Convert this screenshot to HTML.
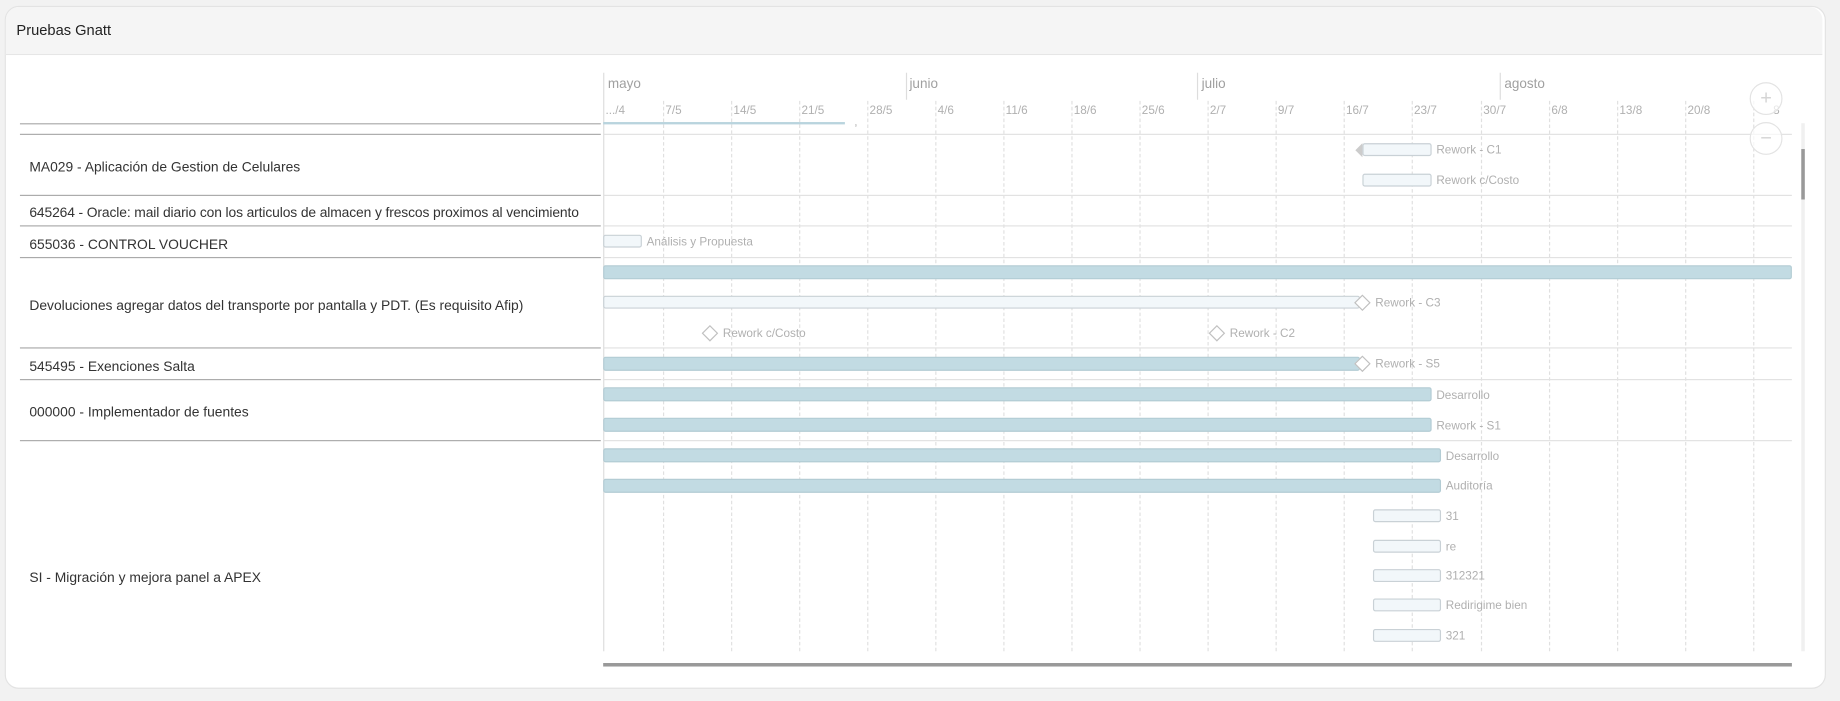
<!DOCTYPE html>
<html><head><meta charset="utf-8"><style>
html,body{margin:0;padding:0;background:#f2f2f2;width:1840px;height:701px;overflow:hidden;font-family:"Liberation Sans",sans-serif}
#w{position:absolute;left:0;top:0;width:1568px;height:597px;transform:scale(1.17347);transform-origin:0 0}
.a{position:absolute}
.card{left:4px;top:5px;width:1550px;height:580px;background:#fff;border:1px solid #e3e3e3;border-radius:12px;overflow:hidden}
.t{font-size:11.8px;color:#333;white-space:nowrap;line-height:14px}
.ll{height:1px;background:#aaa;left:17px;width:495px}
.cl{height:1px;background:#e2e2e2;left:514px;width:1013px}
.g{width:0;border-left:1px dashed #e0e0e0;top:86px;height:469px}
.wk{font-size:10px;color:#b0b0b0;top:89px;line-height:12px}
.mo{font-size:11.5px;color:#a0a0a0;top:65px;line-height:14px}
.ml{width:1px;background:#ddd;top:62px;height:23px}
.lb{height:11px;background:#f2f7fa;border:1px solid #c9d1d6;border-radius:2px;box-sizing:border-box}
.bb{height:12px;background:#c2dbe3;border:1px solid #b3ccd4;border-radius:2px;box-sizing:border-box}
.tx{font-size:10px;color:#b0b0b0;white-space:nowrap;line-height:12px}
.dm{width:8px;height:8px;border:1px solid #c0c0c0;background:#fff;transform:rotate(45deg)}
</style></head><body><div id="w">
<div class="a card"></div>
<div class="a" style="left:5px;top:6px;width:1548px;height:40px;background:#f5f5f5;border-radius:11px 11px 0 0;border-bottom:1px solid #e6e6e6"></div>
<div class="a t" style="left:14px;top:19px;font-size:12.5px;color:#222">Pruebas Gnatt</div>

<div class="a ll" style="top:105px"></div>
<div class="a ll" style="top:114px"></div>
<div class="a ll" style="top:166px"></div>
<div class="a ll" style="top:192px"></div>
<div class="a ll" style="top:219px"></div>
<div class="a ll" style="top:296px"></div>
<div class="a ll" style="top:323px"></div>
<div class="a ll" style="top:375px"></div>
<div class="a t" style="left:25px;top:135px">MA029 - Aplicación de Gestion de Celulares</div>
<div class="a t" style="left:25px;top:174px;letter-spacing:-0.1px">645264 - Oracle: mail diario con los articulos de almacen y frescos proximos al vencimiento</div>
<div class="a t" style="left:25px;top:201px">655036 - CONTROL VOUCHER</div>
<div class="a t" style="left:25px;top:253px">Devoluciones agregar datos del transporte por pantalla y PDT. (Es requisito Afip)</div>
<div class="a t" style="left:25px;top:305px">545495 - Exenciones Salta</div>
<div class="a t" style="left:25px;top:344px">000000 - Implementador de fuentes</div>
<div class="a t" style="left:25px;top:485px">SI - Migración y mejora panel a APEX</div>

<div class="a" style="left:514px;top:62px;width:1px;height:493px;background:#ddd"></div>
<div class="a ml" style="left:772px"></div><div class="a ml" style="left:1020px"></div><div class="a ml" style="left:1278px"></div>
<div class="a mo" style="left:518px">mayo</div><div class="a mo" style="left:775px">junio</div><div class="a mo" style="left:1024px">julio</div><div class="a mo" style="left:1282px">agosto</div>

<div class="a g" style="left:565px"></div><div class="a g" style="left:623px"></div><div class="a g" style="left:681px"></div><div class="a g" style="left:739px"></div><div class="a g" style="left:797px"></div><div class="a g" style="left:855px"></div><div class="a g" style="left:913px"></div><div class="a g" style="left:971px"></div><div class="a g" style="left:1029px"></div><div class="a g" style="left:1087px"></div><div class="a g" style="left:1145px"></div><div class="a g" style="left:1203px"></div><div class="a g" style="left:1262px"></div><div class="a g" style="left:1320px"></div><div class="a g" style="left:1378px"></div><div class="a g" style="left:1436px"></div><div class="a g" style="left:1494px"></div>
<div class="a wk" style="left:516px">.../4</div><div class="a wk" style="left:567px">7/5</div><div class="a wk" style="left:625px">14/5</div><div class="a wk" style="left:683px">21/5</div><div class="a wk" style="left:741px">28/5</div><div class="a wk" style="left:799px">4/6</div><div class="a wk" style="left:857px">11/6</div><div class="a wk" style="left:915px">18/6</div><div class="a wk" style="left:973px">25/6</div><div class="a wk" style="left:1031px">2/7</div><div class="a wk" style="left:1089px">9/7</div><div class="a wk" style="left:1147px">16/7</div><div class="a wk" style="left:1205px">23/7</div><div class="a wk" style="left:1264px">30/7</div><div class="a wk" style="left:1322px">6/8</div><div class="a wk" style="left:1380px">13/8</div><div class="a wk" style="left:1438px">20/8</div><div class="a wk" style="left:1511px">8</div>

<div class="a" style="left:514px;top:104px;width:206px;height:2px;background:#b9d4de"></div>
<div class="a tx" style="left:728px;top:99px">,</div>

<div class="a cl" style="top:114px"></div><div class="a cl" style="top:166px"></div><div class="a cl" style="top:192px"></div><div class="a cl" style="top:219px"></div><div class="a cl" style="top:296px"></div><div class="a cl" style="top:323px"></div><div class="a cl" style="top:375px"></div>

<div class="a" style="left:1155px;top:122px;width:0;height:0;border-top:6px solid transparent;border-bottom:6px solid transparent;border-right:6px solid #ccc"></div>
<div class="a lb" style="left:1161px;top:122px;width:59px"></div>
<div class="a tx" style="left:1224px;top:123px">Rework - C1</div>
<div class="a lb" style="left:1161px;top:148px;width:59px"></div>
<div class="a tx" style="left:1224px;top:149px">Rework c/Costo</div>
<div class="a lb" style="left:514px;top:200px;width:33px"></div>
<div class="a tx" style="left:551px;top:201px">Análisis y Propuesta</div>
<div class="a bb" style="left:514px;top:226px;width:1013px"></div>
<div class="a lb" style="left:514px;top:252px;width:645px"></div>
<div class="a dm" style="left:1156px;top:253px"></div>
<div class="a tx" style="left:1172px;top:253px">Rework - C3</div>
<div class="a dm" style="left:600px;top:279px"></div>
<div class="a tx" style="left:616px;top:279px">Rework c/Costo</div>
<div class="a dm" style="left:1032px;top:279px"></div>
<div class="a tx" style="left:1048px;top:279px">Rework - C2</div>
<div class="a bb" style="left:514px;top:304px;width:645px"></div>
<div class="a dm" style="left:1156px;top:305px"></div>
<div class="a tx" style="left:1172px;top:305px">Rework - S5</div>
<div class="a bb" style="left:514px;top:330px;width:706px"></div>
<div class="a tx" style="left:1224px;top:332px">Desarrollo</div>
<div class="a bb" style="left:514px;top:356px;width:706px"></div>
<div class="a tx" style="left:1224px;top:358px">Rework - S1</div>
<div class="a bb" style="left:514px;top:382px;width:714px"></div>
<div class="a tx" style="left:1232px;top:384px">Desarrollo</div>
<div class="a bb" style="left:514px;top:408px;width:714px"></div>
<div class="a tx" style="left:1232px;top:409px">Auditoría</div>
<div class="a lb" style="left:1170px;top:434px;width:58px"></div><div class="a tx" style="left:1232px;top:435px">31</div>
<div class="a lb" style="left:1170px;top:460px;width:58px"></div><div class="a tx" style="left:1232px;top:461px">re</div>
<div class="a lb" style="left:1170px;top:485px;width:58px"></div><div class="a tx" style="left:1232px;top:486px">312321</div>
<div class="a lb" style="left:1170px;top:510px;width:58px"></div><div class="a tx" style="left:1232px;top:511px">Redirigime bien</div>
<div class="a lb" style="left:1170px;top:536px;width:58px"></div><div class="a tx" style="left:1232px;top:537px">321</div>

<div class="a" style="left:1491px;top:70px;width:26px;height:26px;border:1px solid #e3e3e3;border-radius:50%;background:rgba(255,255,255,.7);color:#d5d5d5;font-size:17px;line-height:25px;text-align:center">+</div>
<div class="a" style="left:1491px;top:104px;width:26px;height:26px;border:1px solid #e3e3e3;border-radius:50%;background:rgba(255,255,255,.7);color:#d5d5d5;font-size:17px;line-height:25px;text-align:center">−</div>

<div class="a" style="left:1535px;top:105px;width:3px;height:450px;background:#f0f0f0"></div>
<div class="a" style="left:1535px;top:127px;width:3px;height:43px;background:#999"></div>
<div class="a" style="left:514px;top:565px;width:1013px;height:3px;background:#999"></div>
</div></body></html>
